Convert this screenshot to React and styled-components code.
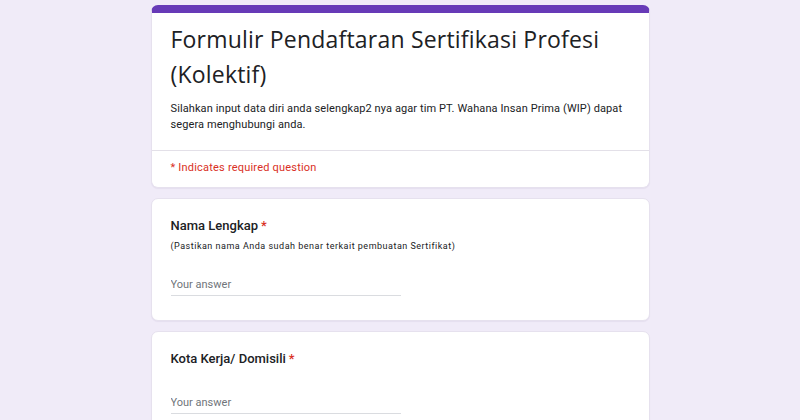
import React from "react";
import styled, { createGlobalStyle } from "styled-components";

const GlobalStyle = createGlobalStyle`
  body {
    margin: 0;
    background-color: #f0ebf8;
    font-family: Roboto, "Noto Sans", Arial, sans-serif;
  }
`;

const Page = styled.div`
  width: 499px;
  margin: 0 auto;
  padding-top: 5px;
  display: flex;
  flex-direction: column;
  gap: 10px;
`;

const Card = styled.div`
  background-color: #fff;
  border-radius: 7px;
  border: 1px solid #e6e1ee;
  border-top: ${(p) => (p.$accent ? "8px solid #673ab7" : "1px solid #e6e1ee")};
  box-shadow: 0 1px 1px rgba(60, 40, 100, 0.06);
  overflow: hidden;
`;

const HeaderBody = styled.div`
  padding: 9px 19px 17px;
  border-bottom: 1px solid #e3e0e8;
`;

const Title = styled.h1`
  margin: 0 0 9px;
  font-family: "Open Sans", Roboto, sans-serif;
  font-weight: 400;
  font-size: 23px;
  line-height: 35px;
  letter-spacing: 0.2px;
  color: #202124;
`;

const Description = styled.p`
  margin: 0;
  font-size: 11px;
  line-height: 16px;
  letter-spacing: 0.1px;
  color: #202124;
`;

const RequiredNote = styled.div`
  padding: 9px 19px 11px;
  font-size: 11px;
  line-height: 16px;
  letter-spacing: 0.2px;
  color: #d93025;
`;

const Question = styled.div`
  padding: 18px 19px 24px;
`;

const Label = styled.div`
  font-size: 13px;
  font-weight: 500;
  line-height: 18px;
  color: #202124;
`;

const Star = styled.span`
  color: #d93025;
  margin-left: 3px;
`;

const Hint = styled.div`
  margin-top: 5px;
  font-size: 9px;
  line-height: 12px;
  letter-spacing: 0.5px;
  color: #202124;
`;

const Answer = styled.input`
  display: block;
  width: 230px;
  margin-top: ${(p) => (p.$hasHint ? "26px" : "28px")};
  padding: 0 0 3px;
  border: none;
  border-bottom: 1px solid #dadce0;
  outline: none;
  font-family: Roboto, sans-serif;
  font-size: 11px;
  line-height: 14px;
  color: #202124;
  background: transparent;

  &::placeholder {
    color: #70757a;
  }
`;

const questions = [
  {
    label: "Nama Lengkap",
    hint: "(Pastikan nama Anda sudah benar terkait pembuatan Sertifikat)",
  },
  { label: "Kota Kerja/ Domisili" },
];

export default function App() {
  return (
    <>
      <GlobalStyle />
      <Page>
        <Card $accent>
          <HeaderBody>
            <Title>Formulir Pendaftaran Sertifikasi Profesi (Kolektif)</Title>
            <Description>
              Silahkan input data diri anda selengkap2 nya agar tim PT. Wahana
              Insan Prima (WIP) dapat segera menghubungi anda.
            </Description>
          </HeaderBody>
          <RequiredNote>* Indicates required question</RequiredNote>
        </Card>
        {questions.map((q) => (
          <Card key={q.label}>
            <Question>
              <Label>
                {q.label}
                <Star>*</Star>
              </Label>
              {q.hint && <Hint>{q.hint}</Hint>}
              <Answer $hasHint={!!q.hint} placeholder="Your answer" />
            </Question>
          </Card>
        ))}
      </Page>
    </>
  );
}
